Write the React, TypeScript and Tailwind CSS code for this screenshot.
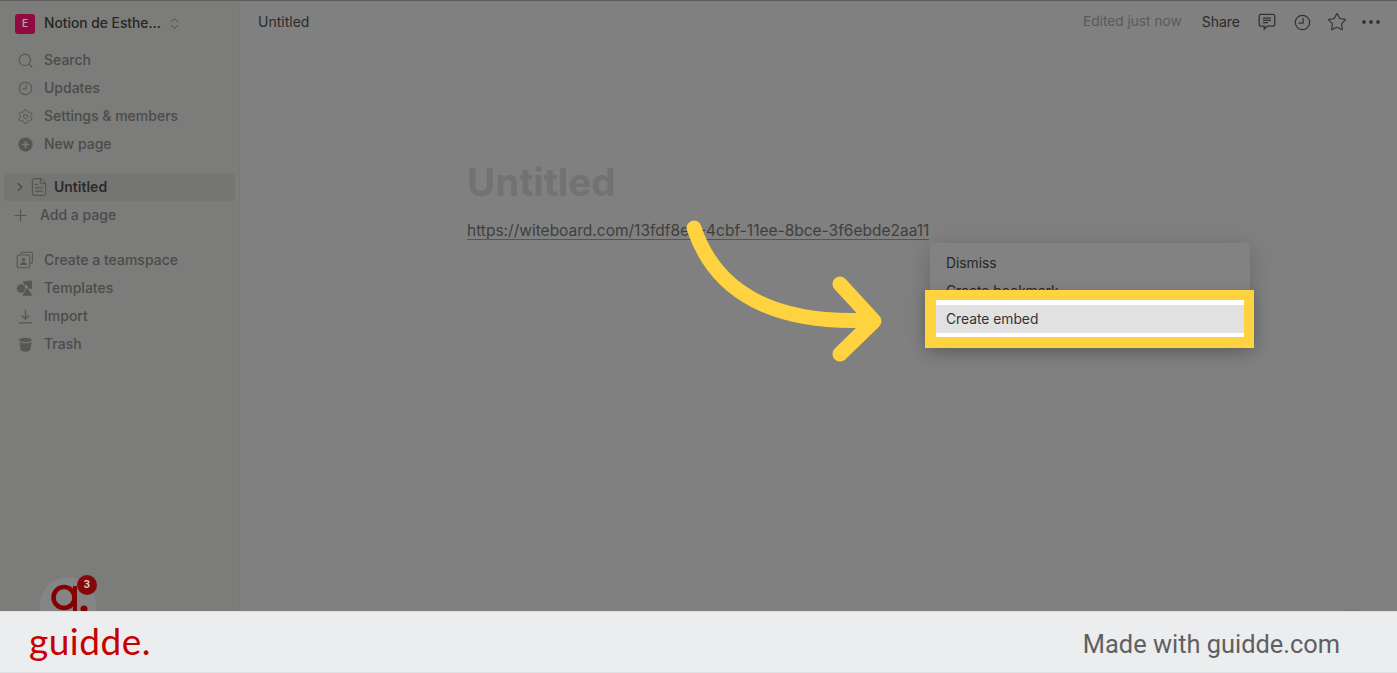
import { ChevronRight, ChevronsUpDown, FileText, Plus, Search, Settings, Star } from "lucide-react";
import type { ReactNode } from "react";

function ClockIcon({ size = 18 }: { size?: number }) {
  return (
    <svg width={size} height={size} viewBox="0 0 18 18" fill="none" stroke="currentColor" strokeWidth="1.3">
      <circle cx="9" cy="9" r="7.6" />
      <path d="M9.6 4.4V9.6H5.2" strokeLinecap="round" />
    </svg>
  );
}

function NewPageIcon() {
  return (
    <svg width="15" height="15" viewBox="0 0 16 16">
      <circle cx="8" cy="8" r="7.6" fill="currentColor" />
      <path d="M8 4.4v7.2M4.4 8h7.200" stroke="#7c7c7b" strokeWidth="1.7" />
    </svg>
  );
}

function TeamspaceIcon() {
  return (
    <svg width="18" height="18" viewBox="0 0 18 18" fill="none" stroke="currentColor" strokeWidth="1.1">
      <path d="M5 3.500V2.600A1.400 1.400 0 0 1 6.400 1.200h8.400a1.600 1.600 0 0 1 1.600 1.600v8.200a1.400 1.400 0 0 1-1.400 1.400h-.8" />
      <rect x="1.200" y="4" width="12.600" height="12.800" rx="1.600" />
      <circle cx="7.500" cy="8.600" r="1.700" fill="currentColor" stroke="none" />
      <path d="M4.200 14c.2-2 1.600-2.900 3.300-2.900s3.100.9 3.300 2.900z" fill="currentColor" stroke="none" />
    </svg>
  );
}

function TemplatesIcon() {
  return (
    <svg width="18" height="18" viewBox="0 0 18 18" fill="currentColor">
      <circle cx="5" cy="9.500" r="4.200" />
      <path d="M7 2.200l8.800-.8.400 8.400-3.400-.2-2.400-4-2.200.6z" />
      <path d="M11.200 8.600l5.200 8.200H6.200z" />
    </svg>
  );
}

function ImportIcon() {
  return (
    <svg width="15" height="15" viewBox="0 0 16 16" fill="none" stroke="currentColor" strokeWidth="1.4">
      <path d="M8 1v9.500M4 6.800L8 10.800l4-4M1 14.800h14" />
    </svg>
  );
}

function TrashIcon() {
  return (
    <svg width="15" height="15" viewBox="0 0 16 16" fill="currentColor">
      <ellipse cx="8" cy="3.200" rx="6.800" ry="2.400" />
      <path d="M1.600 5.200c1.400 1 3.900 1.500 6.400 1.500s5-.5 6.400-1.500l-1.100 8.200c-.2 1.300-2.600 2.200-5.300 2.200s-5.100-.9-5.300-2.200z" />
    </svg>
  );
}

function CommentIcon() {
  return (
    <svg width="18" height="18" viewBox="0 0 18 18" fill="none" stroke="currentColor" strokeWidth="1.3">
      <path d="M3 1.300h12a1.800 1.800 0 0 1 1.800 1.800v8.300a1.800 1.800 0 0 1-1.800 1.800H9.200l-3 3v-3H3a1.800 1.800 0 0 1-1.800-1.800V3.100A1.800 1.800 0 0 1 3 1.300z" />
      <path d="M5 5.200h8M5 7.400h8M5 9.600h5" />
    </svg>
  );
}

function SideRow({ icon, label }: { icon: ReactNode; label: string }) {
  return (
    <div className="flex h-7 items-center text-sm font-medium text-[#4b4b4a]">
      <span className="ml-4 mr-[10px] flex w-[18px] shrink-0 justify-center text-[#565655]">{icon}</span>
      <span>{label}</span>
    </div>
  );
}

function Sidebar() {
  return (
    <aside className="flex w-[240px] shrink-0 flex-col border-r border-[#797978] bg-[#7c7c7b]">
      <div className="flex h-[45px] items-center pl-[15px]">
        <span className="flex h-5 w-5 items-center justify-center rounded-[3px] bg-[#8f0a3f] text-[10px] font-semibold text-[#b8a0a8]">E</span>
        <span className="ml-[9px] text-[13.8px] font-medium text-[#262625]">Notion de Esthe...</span>
        <ChevronsUpDown size={15} strokeWidth={1.6} className="ml-[6px] text-[#4b4b4a]" />
      </div>
      <SideRow icon={<Search size={17} strokeWidth={1.5} />} label="Search" />
      <SideRow icon={<ClockIcon size={15} />} label="Updates" />
      <SideRow icon={<Settings size={17} strokeWidth={1.4} />} label="Settings & members" />
      <SideRow icon={<NewPageIcon />} label="New page" />
      <div className="mx-1 mt-[15px] flex h-7 items-center rounded-[3px] bg-[#757574] text-sm font-semibold text-[#2b2b2a]">
        <ChevronRight size={14} className="ml-[9px] text-[#4b4b4a]" />
        <FileText size={20} strokeWidth={1.1} className="ml-[2px] text-[#4b4b4a]" />
        <span className="ml-[5px]">Untitled</span>
      </div>
      <div className="flex h-7 items-center text-sm font-medium text-[#4b4b4a]">
        <Plus size={19} strokeWidth={1.4} className="ml-[11px] text-[#565655]" />
        <span className="ml-[10px]">Add a page</span>
      </div>
      <div className="mt-[17px]">
        <SideRow icon={<TeamspaceIcon />} label="Create a teamspace" />
        <SideRow icon={<TemplatesIcon />} label="Templates" />
        <SideRow icon={<ImportIcon />} label="Import" />
        <SideRow icon={<TrashIcon />} label="Trash" />
      </div>
    </aside>
  );
}

function Topbar() {
  return (
    <header className="flex h-[42px] items-center justify-between pl-[18px] pr-[17px] text-sm text-[#2b2b2a]">
      <span>Untitled</span>
      <div className="flex items-center">
        <span className="text-[13.7px] text-[#5a5a59]">Edited just now</span>
        <span className="ml-[20px] text-[14px]">Share</span>
        <span className="ml-[18px] flex w-[18px] justify-center text-[#333332]"><CommentIcon /></span>
        <span className="ml-[17px] flex w-[18px] justify-center text-[#333332]"><ClockIcon size={17} /></span>
        <Star size={20} strokeWidth={1.4} className="ml-4 text-[#333332]" />
        <svg width="18" height="4" viewBox="0 0 18 4" className="ml-[15px] text-[#333332]" fill="currentColor">
          <circle cx="2" cy="2" r="1.900" />
          <circle cx="9" cy="2" r="1.900" />
          <circle cx="16" cy="2" r="1.900" />
        </svg>
      </div>
    </header>
  );
}

function EmbedMenu() {
  return (
    <div className="absolute left-[930px] top-[243px] h-[100px] w-[320px] rounded-[4px] bg-[#828282] pt-[6px] text-[13.8px] text-[#262625] shadow-[0_6px_24px_rgba(0,0,0,0.2)]">
      <div className="flex h-7 items-center pl-4">Dismiss</div>
      <div className="flex h-7 items-center pl-4">Create bookmark</div>
    </div>
  );
}

function Highlight() {
  return (
    <div className="absolute left-[925px] top-[290px] h-[58px] w-[329px] bg-[#ffd23f] pl-[11px] pr-[10px] pt-[10px] shadow-[0_4px_14px_rgba(0,0,0,0.15)]">
      <div className="flex h-[37px] items-center border-y-[5px] border-b-4 border-white bg-[#e1e1e1] pl-[10px] text-[13.8px] text-[#333332]">
        Create embed
      </div>
    </div>
  );
}

function Arrow() {
  return (
    <svg className="absolute left-[680px] top-[215px]" width="210" height="155" viewBox="680 215 210 155" fill="none" stroke="#ffd23f" strokeWidth="15" strokeLinecap="round" strokeLinejoin="round">
      <path d="M694 228C716 294 776 325 872 320" />
      <path d="M840 284L874 321L840 354" />
    </svg>
  );
}

function Launcher() {
  return (
    <div className="absolute left-[40px] top-[577px] h-[56px] w-[56px] rounded-full bg-[#858585]">
      <svg width="56" height="56" viewBox="0 0 56 56" fill="none" className="absolute left-0 top-0">
        <circle cx="24" cy="20.500" r="10.500" stroke="#850000" strokeWidth="4.500" />
        <path d="M35 9v25" stroke="#850000" strokeWidth="4" />
        <circle cx="44" cy="32" r="3.500" fill="#850000" />
      </svg>
      <span className="absolute left-[37px] top-[-2px] flex h-5 w-5 items-center justify-center rounded-full bg-[#850808] font-['Roboto',sans-serif] text-[11px] font-bold text-[#d8c8c8]">3</span>
    </div>
  );
}

export default function App() {
  return (
    <div className="relative flex h-[673px] w-[1397px] flex-col overflow-hidden bg-[#808080] font-['Inter',sans-serif]">
      <div className="h-px bg-[#5c5c5c]" />
      <div className="flex flex-1">
        <Sidebar />
        <main className="flex-1">
          <Topbar />
          <div className="pl-[227px] pt-[116px]">
            <h1 className="text-[38.5px] leading-[46px] font-bold text-[#727271]">Untitled</h1>
            <p className="mt-[17px] inline-block border-b border-[#555554] text-[15.5px] leading-[17px] text-[#3f3f3e]">
              https://witeboard.com/13fdf8e0-4cbf-11ee-8bce-3f6ebde2aa11
            </p>
          </div>
        </main>
      </div>
      <EmbedMenu />
      <Highlight />
      <Arrow />
      <Launcher />
      <div className="absolute left-[1335px] top-[609px] h-9 w-9 rounded-full bg-[#7a7a7a]" />
      <footer className="relative flex h-[62px] shrink-0 items-center justify-between border-y border-[#dfe0e2] bg-[#ecedef] pl-[29px] pr-[57px]">
        <span className="-mt-1 font-['Lato',sans-serif] text-[37px] leading-none tracking-[0.5px] text-[#c80000]">guidde.</span>
        <span className="mt-[5px] font-['Roboto',sans-serif] text-[25.4px] text-[#5f6062]">Made with guidde.com</span>
      </footer>
    </div>
  );
}
